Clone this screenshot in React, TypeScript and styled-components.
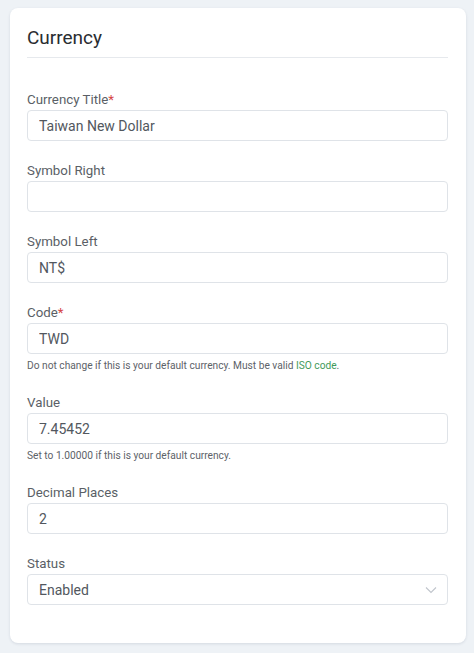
import React from 'react';
import styled, { createGlobalStyle } from 'styled-components';

const GlobalStyle = createGlobalStyle`
  * { box-sizing: border-box; }
  body {
    margin: 0;
    background: #eef2f6;
    font-family: Roboto, "Noto Sans", sans-serif;
  }
`;

type Field = {
  label: string;
  value: string;
  required?: boolean;
  help?: string;
  helpLink?: string;
};

const fields: Field[] = [
  { label: 'Currency Title', value: 'Taiwan New Dollar', required: true },
  { label: 'Symbol Right', value: '' },
  { label: 'Symbol Left', value: 'NT$' },
  {
    label: 'Code',
    value: 'TWD',
    required: true,
    help: 'Do not change if this is your default currency. Must be valid ',
    helpLink: 'ISO code',
  },
  { label: 'Value', value: '7.45452', help: 'Set to 1.00000 if this is your default currency.' },
  { label: 'Decimal Places', value: '2' },
];

const App = () => {
  return (
    <Page>
      <GlobalStyle />
      <Card>
        <CardHeader>
          <Title>Currency</Title>
        </CardHeader>
        <Form>
          {fields.map((f) => (
            <Group key={f.label}>
              <Label>
                {f.label}
                {f.required && <Req>*</Req>}
              </Label>
              <Input defaultValue={f.value} />
              {f.help && (
                <Help>
                  {f.help}
                  {f.helpLink && (
                    <>
                      <HelpLink href="#">{f.helpLink}</HelpLink>.
                    </>
                  )}
                </Help>
              )}
            </Group>
          ))}
          <Group>
            <Label>Status</Label>
            <SelectBox>
              <span>Enabled</span>
              <svg width="12" height="8" viewBox="0 0 12 8" fill="none">
                <path d="M1 1.5L6 6.5L11 1.5" stroke="#c0c5cc" strokeWidth="1.1" />
              </svg>
            </SelectBox>
          </Group>
        </Form>
      </Card>
    </Page>
  );
};

const Page = styled.div`
  padding: 8px 8px 10px 10px;
  min-height: 653px;
`;

const Card = styled.div`
  width: 456px;
  background: #fff;
  border-radius: 8px;
  box-shadow: 0 1px 3px rgba(30, 50, 80, 0.12);
  padding: 0 18px 17px 17px;
`;

const CardHeader = styled.div`
  padding: 18px 0 8px;
  border-bottom: 1px solid #e6e9ed;
`;

const Title = styled.h2`
  margin: 0;
  font-size: 19px;
  line-height: 23px;
  font-weight: 400;
  color: #2a2d31;
`;

const Form = styled.div`
  padding-top: 33px;
`;

const Group = styled.div`
  display: flex;
  flex-direction: column;
  margin-bottom: 21px;
`;

const Label = styled.label`
  font-size: 13.3px;
  line-height: 17px;
  color: #5a5f66;
  margin-bottom: 2px;
`;

const Req = styled.span`
  color: #d64545;
`;

const Input = styled.input`
  height: 31px;
  width: 100%;
  border: 1px solid #dfe3e8;
  border-radius: 4px;
  padding: 0 11px;
  font-family: inherit;
  font-size: 14px;
  color: #52575e;
  outline: none;
`;

const SelectBox = styled.div`
  height: 31px;
  display: flex;
  align-items: center;
  justify-content: space-between;
  border: 1px solid #dfe3e8;
  border-radius: 4px;
  padding: 0 10px 0 11px;
  font-size: 14px;
  color: #52575e;
`;

const Help = styled.div`
  margin-top: 5px;
  font-size: 10.2px;
  line-height: 14px;
  color: #5d6268;
`;

const HelpLink = styled.a`
  color: #3f9a5a;
  text-decoration: none;
`;

export default App;
